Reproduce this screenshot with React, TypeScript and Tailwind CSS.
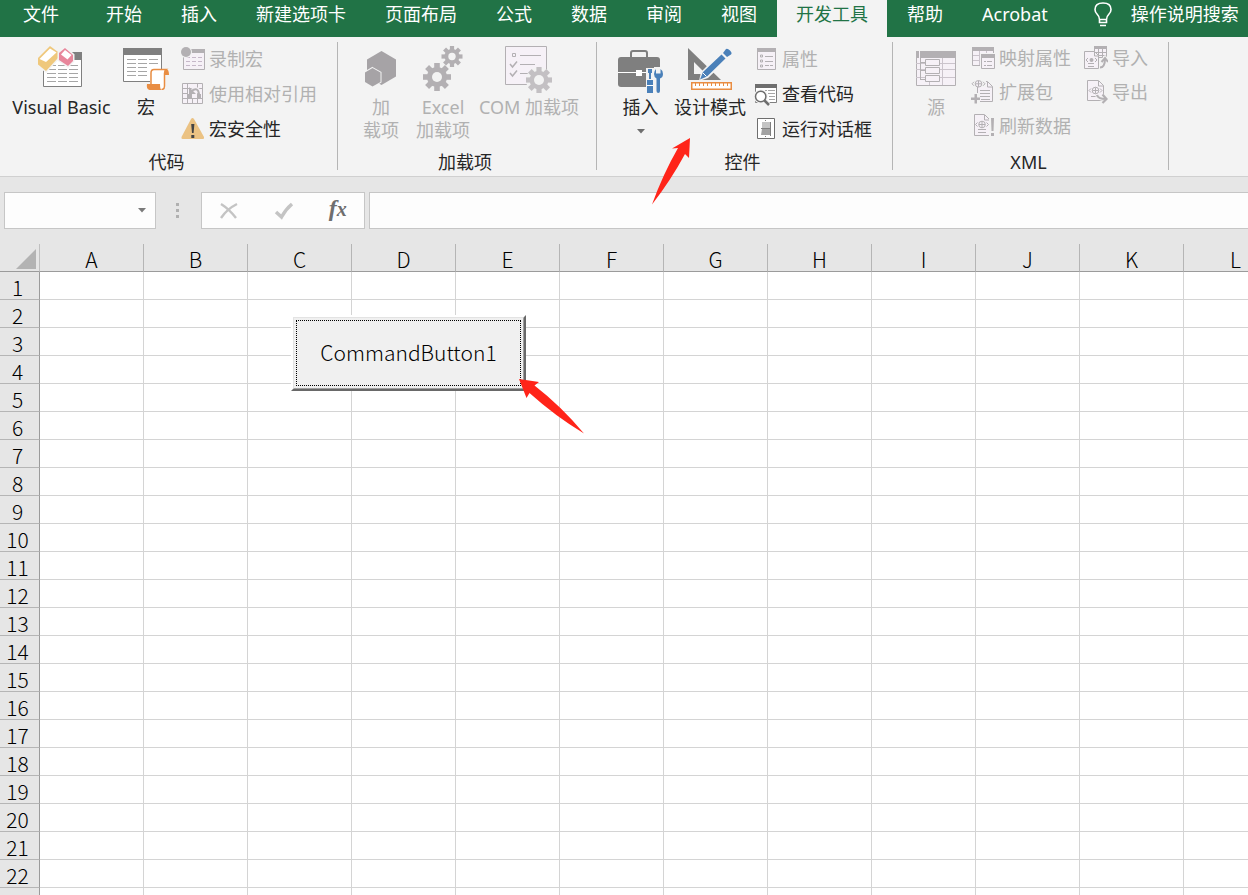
import { useState, type ReactNode } from "react";
import clsx from "clsx";

const TABS = ["开始", "插入", "新建选项卡", "页面布局", "公式", "数据", "审阅", "视图", "开发工具", "帮助", "Acrobat"];
const COLUMNS = "ABCDEFGHIJKL".split("");
const ROWS = Array.from({ length: 22 }, (_, i) => i + 1);

const GREY = "#b3b0b3";
const PALE = "#f6f1f7";
const PAPER = "#f3f3f3";

/* ---------- icons ---------- */

function Icon({ w, h, children }: { w: number; h: number; children: ReactNode }) {
  return (
    <svg width={w} height={h} viewBox={`0 0 ${w} ${h}`} fill="none" className="shrink-0" aria-hidden="true">
      {children}
    </svg>
  );
}

function Gear({ cx, cy, r, hole, color }: { cx: number; cy: number; r: number; hole: number; color: string }) {
  return (
    <g>
      {[0, 45, 90, 135].map((a) => (
        <rect
          key={a}
          x={cx - r * 0.2}
          y={cy - r}
          width={r * 0.4}
          height={r * 2}
          fill={color}
          transform={`rotate(${a} ${cx} ${cy})`}
        />
      ))}
      <circle cx={cx} cy={cy} r={r * 0.72} fill={color} />
      <circle cx={cx} cy={cy} r={hole} fill={PAPER} />
    </g>
  );
}

function Globe({ cx, cy }: { cx: number; cy: number }) {
  return (
    <g stroke={GREY}>
      <circle cx={cx} cy={cy} r="3.3" fill={PALE} />
      <path d={`M${cx - 3} ${cy}h6M${cx} ${cy - 3}v6`} />
      <path d={`M${cx - 4.5} ${cy - 2}l-2 2l2 2M${cx + 4.5} ${cy - 2}l2 2l-2 2`} />
    </g>
  );
}

const VisualBasicIcon = () => (
  <Icon w={47} h={44}>
    <path d="M5.5 6.5h38v34h-38z" fill="#fff" stroke="#7f7f7f" />
    <path d="M5 6h39v8H5z" fill="#7f7f7f" />
    <path
      d="M9 19.5h9m2 0h9m2 0h9M9 23.5h9m2 0h9m2 0h9M9 27.5h9m2 0h9m2 0h9M9 31.5h9m2 0h9m2 0h9M9 35.5h9m2 0h9m2 0h9"
      stroke="#a6a6a6"
    />
    <path d="M12 0L0 12v6.500l8 6.500l12-13V6z" fill="#efc87c" stroke={PAPER} strokeWidth="3" paintOrder="stroke" />
    <path d="M12 2.500L18.500 6.500L8 16L1.500 13z" fill="#fff" />
    <path d="M27 2l-6 5v7l9 6l5-5V9z" fill="#e8869b" stroke={PAPER} strokeWidth="3" paintOrder="stroke" />
    <path d="M27 4l6.500 5l-4 4.500L23 8.500z" fill="#fff" />
  </Icon>
);

const MacroIcon = () => (
  <Icon w={46} h={44}>
    <path d="M.5 2.500h38v33H.5z" fill="#fff" stroke="#7f7f7f" />
    <path d="M0 2h39v7H0z" fill="#7f7f7f" />
    <path
      d="M4 13.500h9m2 0h9m2 0h9M4 17.500h9m2 0h9m2 0h9M4 21.500h9m2 0h9M4 25.500h9m2 0h9M4 29.500h9m2 0h9"
      stroke="#a6a6a6"
    />
    <path d="M30 23h13q3 0 3 5h-3v12q0 5-4 5H23v-7h4V27q0-4 3-4z" fill={PAPER} />
    <path d="M28 38V27q0-3.500 3-3.500h12q-1.500 1-1.500 4V40q0 3.500-3 3.500" fill="#fff" stroke="#e98d42" strokeWidth="1.500" />
    <path d="M42 23h1q3 0 3 6h-4zM24 38h13q0 6 2 6H26.500Q23 43 24 38z" fill="#e98d42" />
  </Icon>
);

const RecordIcon = () => (
  <Icon w={24} h={24}>
    <path d="M2.500 2.500h21v20h-21z" fill={PALE} stroke={GREY} />
    <path d="M8 2h16v4H8z" fill={GREY} />
    <path d="M5 10.500h4m2 0h4m2 0h4M5 14.500h4m2 0h4m2 0h4M5 18.500h4m2 0h4m2 0h4" stroke="#c6b8c9" />
    <circle cx="5" cy="5" r="5" fill={GREY} stroke={PAPER} strokeWidth="2" paintOrder="stroke" />
  </Icon>
);

const RelativeIcon = () => (
  <Icon w={24} h={24}>
    <path d="M1.500 1.500h20v20h-20z" fill={PALE} stroke={GREY} />
    <path d="M6.500 2v19M16.500 2v19M2 6.500h19M2 11.500h5M2 16.500h19M11.500 17v4" stroke={GREY} />
    <path d="M7 12h4v4H7zM16 12h4v4h-4z" fill={GREY} />
    <path d="M18 11q-1-7-9-1" stroke={PALE} strokeWidth="4" />
    <path d="M18 12q-1-8-8-2.500" stroke={GREY} strokeWidth="2" />
    <path d="M8 5v7h7z" fill={GREY} />
  </Icon>
);

const WarningIcon = () => (
  <Icon w={24} h={24}>
    <path d="M10 2q1.500-2 3 0L23 20q.5 2-1 2H1.500Q0 22 .5 20z" fill="#ebc283" />
    <path d="M10.200 7h3.200l-.8 9h-1.600zM10.300 18h3v3h-3z" fill="#444" />
  </Icon>
);

const AddInIcon = () => (
  <Icon w={32} h={44}>
    <path d="M16.500 5L31 13.500v17L16.500 39L2 30.500v-17z" fill="#a6a3a6" />
    <path d="M7.500 22l8 4.500V36l-8 4.500L0 36v-9.500z" fill="#a6a3a6" stroke={PAPER} strokeWidth="2" paintOrder="stroke" />
  </Icon>
);

const ExcelAddInIcon = () => (
  <Icon w={40} h={46}>
    <Gear cx={29} cy={10.5} r={10.5} hole={3.7} color={GREY} />
    <Gear cx={14} cy={31} r={14} hole={5} color={GREY} />
  </Icon>
);

const ComAddInIcon = () => (
  <Icon w={48} h={48}>
    <path d="M.5.5h41v38H.5z" fill={PALE} stroke={GREY} />
    <path d="M7.500 7.500h3v3h-3zM15 9.500h21M15 18.500h15M15 27.500h8" stroke={GREY} />
    <path d="M5 18l2.500 3L12 15.500M5 27l2.500 3L12 24.500" stroke={GREY} strokeWidth="1.500" />
    <circle cx="34" cy="34" r="13" fill={PAPER} />
    <Gear cx={34} cy={34} r={13} hole={5} color="#c3c0c3" />
  </Icon>
);

const ToolboxIcon = () => (
  <Icon w={45} h={48}>
    <path d="M13 11V7q0-2 2-2h12q2 0 2 2v4" stroke="#7f7f7f" strokeWidth="2" />
    <rect y="11" width="42" height="30" rx="3" fill="#7f7f7f" />
    <path d="M0 26.500h42" stroke="#fff" />
    <path d="M18 24h6v6h-6z" fill="#fff" />
    <path d="M28 22h8v-1h9v9l-2 3v15H28z" fill={PAPER} />
    <path d="M30 23h4v4h-1v6h-2v-6h-1zM29 34h6v13h-6z" fill="#4a80b9" />
    <path d="M29 39.500h6" stroke="#fff" />
    <path d="M38 23v4.500h4.500V23q2.500 1.500 2.500 5t-3 4.500V45q0 2-1.700 2T38.500 45V32.500Q36 31 36 28t2-5z" fill="#4a80b9" />
  </Icon>
);

const DesignIcon = () => (
  <Icon w={46} h={44}>
    <path d="M1 2l33 32H1zM7 16v12h12z" fill="#7f7f7f" fillRule="evenodd" />
    <path d="M12 35l2-9L35 5l5-4l6 6l-4 5l-21 20z" fill={PAPER} />
    <path d="M13 33.500l3-7.500L34.500 8.500l4 4L20 30.500zM36 7l3-4q1.500-1 4 1.500t1 4L40 11z" fill="#4a80b9" />
    <path d="M16 27l3.500 3.500" stroke="#fff" />
    <path d="M4.750 36.750h39.500v6.500H4.750z" fill="#fff" stroke="#e98d42" strokeWidth="1.500" />
    <path d="M8.500 37v3m4-3v3m4-3v3m4-3v3m4-3v3m4-3v3m4-3v3m4-3v3m4-3v3" stroke="#e98d42" />
  </Icon>
);

const PropertiesIcon = () => (
  <Icon w={24} h={24}>
    <path d="M3.500 1.500h18v21h-18z" fill={PALE} stroke={GREY} />
    <path d="M3 1h19v4H3z" fill={GREY} />
    <path d="M6.500 8h2v2h-2zM6.500 13h2v2h-2zM6.500 18h2v2h-2zM11 9.500h8M11 14.500h8M11 18.500h4m1 0h3" stroke={GREY} />
  </Icon>
);

const ViewCodeIcon = () => (
  <Icon w={24} h={24}>
    <path d="M1.500 2.500h21v18h-21z" fill="#fff" stroke="#7f7f7f" />
    <path d="M1 2h22v4H1z" fill="#6e6e6e" />
    <path d="M11 8.500h2m1 0h7M14 11.500h7M15 14.500h6M15 17.500h6" stroke="#a6a6a6" />
    <path d="M10 18l5 5.500" stroke={PAPER} strokeWidth="5" />
    <circle cx="6.700" cy="14.500" r="7" fill={PAPER} />
    <circle cx="6.700" cy="14.500" r="5.200" fill="#fff" stroke="#6e6e6e" strokeWidth="1.500" />
    <path d="M10.500 18.500l4.500 4.500" stroke="#6e6e6e" strokeWidth="2.500" />
  </Icon>
);

const RunDialogIcon = () => (
  <Icon w={24} h={24}>
    <path d="M3.500 1.500h17v20h-17z" fill="#fff" stroke="#6e6e6e" />
    <path d="M8 5h8v6H8z" fill="#c4c4c4" />
    <path d="M8 12h8v6H7z" fill="#a3a3a3" />
    <path d="M16.500 5v14M7 11.500h9M11.500 3v1M11.500 19v1" stroke="#7f7f7f" />
  </Icon>
);

const SourceIcon = () => (
  <Icon w={40} h={44}>
    <path d="M.5 5.500h39v34H.5z" fill={PALE} stroke={GREY} />
    <path d="M0 5h40v7H0z" fill={GREY} />
    <path d="M0 17.500h39M0 23.500h39M0 31.500h39M26.500 12v27M13.500 36v3" stroke="#cbc4cc" />
    <path d="M3.500 5v7" stroke={PALE} />
    <path d="M4.500 12v21.500M4 16.500h5M4 24.500h5M4 33.500h5" stroke={GREY} />
    <path d="M9.500 13.500h14v6h-14zM9.500 21.500h14v6h-14zM9.500 29.500h14v6h-14z" fill={PALE} stroke={GREY} />
  </Icon>
);

const MapPropertiesIcon = () => (
  <Icon w={24} h={24}>
    <path d="M1.500 1.500h21v18h-21z" fill={PALE} stroke={GREY} />
    <path d="M1 1h22v4H1z" fill={GREY} />
    <path d="M2 9.500h20M2 14.500h8M8.500 5v14M15.500 5v4" stroke="#cbc4cc" />
    <path d="M10.500 8.500h13v14h-13z" fill={PALE} stroke={PAPER} strokeWidth="3" />
    <path d="M10.500 8.500h13v14h-13z" fill={PALE} stroke={GREY} />
    <path d="M10 8h14v4H10z" fill={GREY} />
    <path d="M13 15.500h2m1 0h5M13 19.500h2m1 0h5" stroke={GREY} />
  </Icon>
);

const ExpansionIcon = () => (
  <Icon w={24} h={24}>
    <path d="M6.500 1.500h10l5 5v15h-15z" fill={PALE} stroke={GREY} />
    <path d="M16.500 2v5h5M9 10.500h10M9 13.500h10M9 16.500h10M10 19.500h9" stroke={GREY} />
    <path d="M0 0h15v7H0zM0 13h9v11H0z" fill={PAPER} />
    <Globe cx={7.5} cy={3.8} />
    <path d="M3.500 14h2.500v3.500H9V20H6v3.500H3.500V20H0v-2.500h3.500z" fill={GREY} />
  </Icon>
);

const RefreshDataIcon = () => (
  <Icon w={24} h={24}>
    <path d="M3.500.5h10l5 5v16h-15z" fill={PALE} stroke={GREY} />
    <path d="M13.500 1v5h5M7 15.500h8M7 18.500h8" stroke={GREY} />
    <path d="M18 5h6v17h-6z" fill={PAPER} />
    <Globe cx={11} cy={10.5} />
    <path d="M20 4h3l-.5 13h-2zM20 19h3v3h-3z" fill={GREY} />
  </Icon>
);

const ImportIcon = () => (
  <Icon w={24} h={24}>
    <path d="M10.500.5h12v11h-12z" fill={PALE} stroke={GREY} />
    <path d="M10 0h13v3H10z" fill={GREY} />
    <path d="M14.500 3v9M18.500 3v9M11 6.500h11M11 9.500h11" stroke={GREY} />
    <path d="M.5 5.500h10l4 4v13H.500z" fill={PALE} stroke={GREY} />
    <path d="M10.500 6v4h4M4 17.500h6M4 20.500h6" stroke={GREY} />
    <path d="M4 12l-2 2l2 2M11 12l2 2l-2 2" stroke={GREY} />
    <circle cx="7.500" cy="14" r="2" fill={GREY} />
    <path d="M16 21q5 0 5-8M17.500 16l3.500-4l3 4" stroke={PAPER} strokeWidth="4" />
    <path d="M16 21.500q5 0 5-9M17.500 16l3.500-4l3 4" stroke={GREY} strokeWidth="2" />
  </Icon>
);

const ExportIcon = () => (
  <Icon w={24} h={24}>
    <path d="M3.500.5h11l5 5v15h-16z" fill={PALE} stroke={GREY} />
    <path d="M14.500 1v5h5M7 16.500h5" stroke={GREY} />
    <Globe cx={11.5} cy={10.5} />
    <path d="M13 15q1 4 9 4M19 14.500l4 4.500l-4 4" stroke={PAPER} strokeWidth="4" />
    <path d="M13 15q1 4 9 4M18.500 14.500l4 4.500l-4 4" stroke={GREY} strokeWidth="2.200" />
  </Icon>
);

const BulbIcon = () => (
  <Icon w={20} h={26}>
    <path
      d="M6.500 18.500q0-3-2.500-5.500Q2 11 2 8.500Q2 2 10 2t8 6.500q0 2.500-2 4.500q-2.500 2.500-2.500 5.500zM6.500 18.500v3h7v-3M7 24.500h6"
      stroke="#fff"
      strokeWidth="1.600"
    />
  </Icon>
);

/* ---------- ribbon parts ---------- */

function BigButton({
  icon,
  children,
  disabled,
  className,
}: {
  icon: ReactNode;
  children: ReactNode;
  disabled?: boolean;
  className?: string;
}) {
  return (
    <button
      type="button"
      disabled={disabled}
      className={clsx(
        "flex shrink-0 flex-col items-center px-[3px] pt-[9px] text-center leading-[23px] whitespace-nowrap disabled:text-[#b1b1b1]",
        className
      )}
    >
      <span className="mb-[6px] flex h-11 items-start">{icon}</span>
      <span>{children}</span>
    </button>
  );
}

function SmallButton({
  icon,
  children,
  disabled,
  tight,
}: {
  icon: ReactNode;
  children: ReactNode;
  disabled?: boolean;
  tight?: boolean;
}) {
  return (
    <button
      type="button"
      disabled={disabled}
      className={clsx(
        "flex shrink-0 items-center gap-1 px-1 whitespace-nowrap disabled:text-[#b1b1b1]",
        tight ? "h-[34px]" : "h-[35px]"
      )}
    >
      {icon}
      <span>{children}</span>
    </button>
  );
}

function Group({ title, children, className }: { title: string; children: ReactNode; className?: string }) {
  return (
    <>
      <section aria-label={title} className="flex shrink-0 flex-col">
        <div className={clsx("flex h-28 items-start", className)}>{children}</div>
        <h2 className="h-7 pr-1 text-center leading-[29px]">{title}</h2>
      </section>
      <div className="mt-[5px] h-32 w-px shrink-0 bg-[#b5b5b5]" />
    </>
  );
}

function Ribbon() {
  return (
    <div className="flex h-[140px] overflow-hidden border-b border-[#d0d0d0] bg-[#f3f3f3] text-[#262626]">
      <Group title="代码" className="gap-1 pr-4 pl-2">
        <BigButton icon={<VisualBasicIcon />} className="w-[107px]">
          Visual Basic
        </BigButton>
        <BigButton icon={<MacroIcon />} className="w-[54px]">
          宏
        </BigButton>
        <div className="flex flex-col items-start pt-1">
          <SmallButton icon={<RecordIcon />} disabled>
            录制宏
          </SmallButton>
          <SmallButton icon={<RelativeIcon />} disabled>
            使用相对引用
          </SmallButton>
          <SmallButton icon={<WarningIcon />}>宏安全性</SmallButton>
        </div>
      </Group>

      <Group title="加载项" className="pr-[11px] pl-[22px]">
        <BigButton icon={<AddInIcon />} disabled className="mr-[11px]">
          加
          <br />
          载项
        </BigButton>
        <BigButton icon={<ExcelAddInIcon />} disabled>
          Excel
          <br />
          加载项
        </BigButton>
        <BigButton icon={<ComAddInIcon />} disabled className="w-[112px]">
          COM 加载项
        </BigButton>
      </Group>

      <Group title="控件" className="pr-4 pl-[18px]">
        <BigButton icon={<ToolboxIcon />} className="mr-[5px]">
          插入
          <svg width="8" height="5" viewBox="0 0 8 5" className="mx-auto mt-[10px]" aria-hidden="true">
            <path d="M0 0h8L4 4.500z" fill="#6e6e6e" />
          </svg>
        </BigButton>
        <BigButton icon={<DesignIcon />} className="mr-px">
          设计模式
        </BigButton>
        <div className="flex flex-col items-start pt-1">
          <SmallButton icon={<PropertiesIcon />} disabled>
            属性
          </SmallButton>
          <SmallButton icon={<ViewCodeIcon />}>查看代码</SmallButton>
          <SmallButton icon={<RunDialogIcon />}>运行对话框</SmallButton>
        </div>
      </Group>

      <Group title="XML" className="pr-4 pl-5">
        <BigButton icon={<SourceIcon />} disabled className="mr-2">
          源
        </BigButton>
        <div className="mr-[5px] flex flex-col items-start pt-1">
          <SmallButton icon={<MapPropertiesIcon />} disabled tight>
            映射属性
          </SmallButton>
          <SmallButton icon={<ExpansionIcon />} disabled tight>
            扩展包
          </SmallButton>
          <SmallButton icon={<RefreshDataIcon />} disabled tight>
            刷新数据
          </SmallButton>
        </div>
        <div className="flex flex-col items-start pt-1">
          <SmallButton icon={<ImportIcon />} disabled tight>
            导入
          </SmallButton>
          <SmallButton icon={<ExportIcon />} disabled tight>
            导出
          </SmallButton>
        </div>
      </Group>
    </div>
  );
}

function FormulaBar() {
  return (
    <div className="flex h-[67px] items-start pt-[15px] pl-1">
      <div className="flex h-[37px] w-[152px] shrink-0 items-center border border-[#c6c6c6] bg-[#fdfdfd] pr-[9px]">
        <input type="text" aria-label="名称框" className="h-full min-w-0 flex-1 bg-transparent px-2 outline-none" />
        <button type="button" aria-label="打开名称列表">
          <svg width="8" height="5" viewBox="0 0 8 5" aria-hidden="true">
            <path d="M0 0h8L4 4.500z" fill="#7a7a7a" />
          </svg>
        </button>
      </div>
      <div className="flex h-[37px] w-[45px] shrink-0 flex-col items-center justify-center gap-[3px] pr-0.5 pb-px">
        <span className="size-[3px] bg-[#b0b0b0]" />
        <span className="size-[3px] bg-[#b0b0b0]" />
        <span className="size-[3px] bg-[#b0b0b0]" />
      </div>
      <div className="mr-1 flex h-[37px] w-[164px] shrink-0 items-center justify-around border border-[#c6c6c6] bg-[#fdfdfd]">
        <button type="button" aria-label="取消" disabled>
          <Icon w={20} h={18}>
            <path d="M2 2q8 5 15 14M18 2Q8 7 2 16" stroke="#c4c4c4" strokeWidth="2.400" />
          </Icon>
        </button>
        <button type="button" aria-label="输入" disabled>
          <Icon w={20} h={18}>
            <path d="M2 10l5.500 5Q12 7 18 2" stroke="#c4c4c4" strokeWidth="3.500" />
          </Icon>
        </button>
        <button
          type="button"
          aria-label="插入函数"
          className="pb-1 font-['Liberation_Serif',serif] text-2xl leading-7 font-bold text-[#6e6e6e] italic"
        >
          f<span className="text-xl">x</span>
        </button>
      </div>
      <input
        type="text"
        aria-label="编辑栏"
        className="h-[37px] min-w-0 flex-1 border border-r-0 border-[#c6c6c6] bg-[#fdfdfd] px-2 outline-none"
      />
    </div>
  );
}

function Sheet() {
  return (
    <div className="relative min-h-0 flex-1 overflow-hidden bg-white font-['Noto_Sans_CJK_SC',sans-serif] text-[21px] font-light text-black">
      <table className="w-max table-fixed border-separate border-spacing-0">
        <thead>
          <tr className="h-7 bg-[#e6e6e6]">
            <th className="w-10 border-r border-b border-[#9b9b9b] border-r-[#c0c0c0] p-0" aria-label="全选">
              <svg width="20" height="20" viewBox="0 0 20 20" className="mt-[3px] ml-4" aria-hidden="true">
                <path d="M20 0v20H0z" fill="#b3b3b3" />
              </svg>
            </th>
            {COLUMNS.map((c) => (
              <th
                key={c}
                scope="col"
                className="w-[104px] border-r border-b border-[#9b9b9b] border-r-[#b5b5b5] p-0 pt-[3px] leading-6 font-light"
              >
                {c}
              </th>
            ))}
          </tr>
        </thead>
        <tbody>
          {ROWS.map((r) => (
            <tr key={r} className="h-7">
              <th
                scope="row"
                className="border-r border-b border-[#b5b5b5] border-r-[#9b9b9b] bg-[#e6e6e6] p-0 pt-[3px] pr-1 leading-6 font-light"
              >
                {r}
              </th>
              {COLUMNS.map((c) => (
                <td key={c} className="border-r border-b border-[#d4d4d4] p-0" />
              ))}
            </tr>
          ))}
          <tr className="h-7">
            <th className="border-r border-[#9b9b9b] bg-[#e6e6e6] p-0" />
            {COLUMNS.map((c) => (
              <td key={c} className="border-r border-[#d4d4d4] p-0" />
            ))}
          </tr>
        </tbody>
      </table>

      {/* ActiveX control placed over the cells */}
      <button
        type="button"
        className="absolute top-[71px] left-[291px] h-[76px] w-[235px] border-2 border-[#696969] border-t-white border-l-white bg-[#f0f0f0]"
      >
        <span className="flex h-full w-full border border-[#a0a0a0] border-t-[#e3e3e3] border-l-[#e3e3e3] p-[2px]">
          <span className="flex flex-1 items-center justify-center border border-dotted border-black pb-0.5">
            CommandButton1
          </span>
        </span>
      </button>
      <svg width="66" height="56" viewBox="0 0 66 56" className="absolute top-[135px] left-[519px]" aria-hidden="true">
        <path d="M0 0L20 3L15.500 6.500Q42 27 65 54.500Q36 37 10.500 14L7.500 19z" fill="#ff2419" />
      </svg>
    </div>
  );
}

export default function App() {
  const [active, setActive] = useState("开发工具");

  return (
    <div className="relative flex h-screen flex-col overflow-hidden bg-[#e6e6e6] font-['Noto_Sans','Noto_Sans_CJK_SC',sans-serif] text-lg">
      <nav className="flex h-[37px] shrink-0 gap-px overflow-hidden bg-[#217346] leading-7 text-white">
        <button type="button" className="w-[86px] shrink-0 pr-1 pb-[9px]">
          文件
        </button>
        {TABS.map((tab) => (
          <button
            key={tab}
            type="button"
            onClick={() => setActive(tab)}
            className={clsx(
              "shrink-0 px-[19px] pb-[9px] whitespace-nowrap",
              tab === active && "bg-[#f3f3f3] text-[#217346]"
            )}
          >
            {tab}
          </button>
        ))}
        <button type="button" className="ml-[25px] flex shrink-0 items-center gap-[18px] pb-[9px] whitespace-nowrap">
          <BulbIcon />
          操作说明搜索
        </button>
      </nav>
      <Ribbon />
      <FormulaBar />
      <Sheet />

      <svg width="40" height="68" viewBox="0 0 40 68" className="absolute top-[138px] left-[651px]" aria-hidden="true">
        <path d="M39 0L21 10.500L27 10Q12 36 1 66.500Q20 42 34 16L38 20z" fill="#ff2419" />
      </svg>
    </div>
  );
}
